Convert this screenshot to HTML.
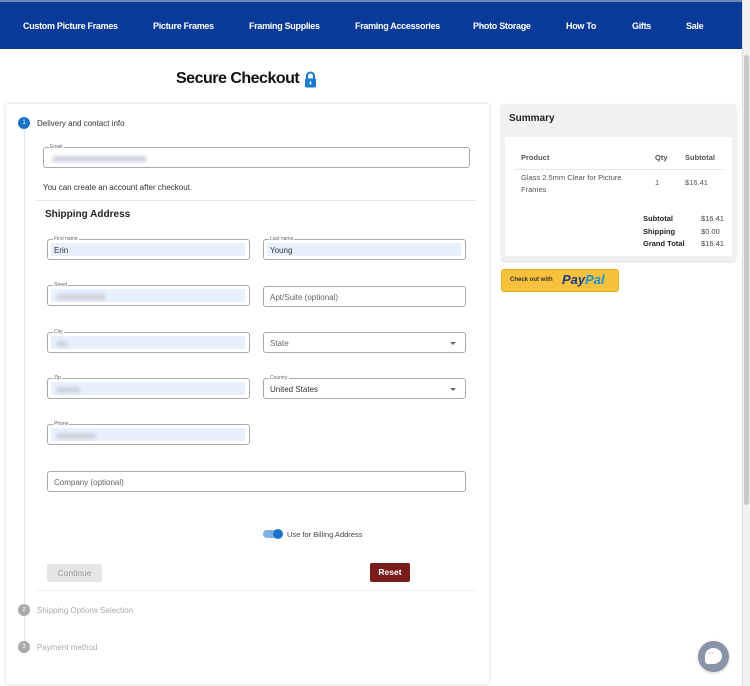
<!DOCTYPE html>
<html><head><style>
*{box-sizing:border-box;margin:0;padding:0}
body{width:750px;height:686px;overflow:hidden;background:#fff;font-family:"Liberation Sans",sans-serif;position:relative;color:#222}
.a{position:absolute}
.nav{left:0;top:0;width:742px;height:49px;background:#0a3a97;border-top:2px solid #6f86b8}
.nav span{position:absolute;top:19px;color:#fff;font-size:9px;font-weight:bold;white-space:nowrap;letter-spacing:-0.3px}
.f{position:absolute;border:1px solid #aaa;border-radius:3px;height:21px;background:#fff}
.f.fill::after{content:"";position:absolute;left:3px;right:4px;top:3px;bottom:3px;background:#e8f0fe}
.lbl{position:absolute;left:5px;top:-4px;font-size:5px;color:#666;background:#fff;padding:0 1px;line-height:6px;z-index:2}
.val{position:absolute;left:6px;top:6px;font-size:8px;color:#333;z-index:2}
.ph{position:absolute;left:6px;top:6px;font-size:8px;color:#666}
.blur{position:absolute;left:8px;top:8px;height:6px;background:#cfd4dc;border-radius:3px;filter:blur(1.5px);z-index:2}
.car{position:absolute;right:9px;top:9px;width:0;height:0;border-left:3px solid transparent;border-right:3px solid transparent;border-top:3px solid #666}
.step{position:absolute;width:12px;height:12px;border-radius:50%;font-size:6px;color:#fff;text-align:center;line-height:12px}
</style></head><body>
<div class="a nav">
<span style="left:23px">Custom Picture Frames</span>
<span style="left:153px">Picture Frames</span>
<span style="left:249px">Framing Supplies</span>
<span style="left:355px">Framing Accessories</span>
<span style="left:473px">Photo Storage</span>
<span style="left:566px">How To</span>
<span style="left:632px">Gifts</span>
<span style="left:686px">Sale</span>
</div>
<div class="a" style="left:742px;top:0;width:8px;height:686px;background:#f1f1f1;border-left:1px solid #ddd"></div>
<div class="a" style="left:744px;top:55px;width:5px;height:450px;background:#c8c8c8;border-radius:3px"></div>

<div class="a" style="left:176px;top:70px;font-size:16px;font-weight:bold;color:#111;letter-spacing:-0.5px">Secure Checkout</div>
<svg class="a" style="left:304px;top:71px" width="13" height="17" viewBox="0 0 13 17"><path d="M3 8V5a3.5 3.5 0 0 1 7 0v3" fill="none" stroke="#1a7bd0" stroke-width="2"/><rect x="1" y="7.5" width="11" height="9" rx="1.5" fill="#1a7bd0"/><rect x="5.7" y="10.5" width="1.6" height="3" fill="#fff"/></svg>

<div class="a" style="left:6px;top:104px;width:483px;height:580px;background:#fff;box-shadow:0 0 3px rgba(0,0,0,.18);border-radius:2px"></div>
<div class="a" style="left:24px;top:130px;width:1px;height:516px;background:#e4e4e4"></div>
<div class="step" style="left:18px;top:117px;background:#1a73c8">1</div>
<div class="a" style="left:37px;top:119px;font-size:8px;color:#333">Delivery and contact info</div>

<div class="f" style="left:43px;top:147px;width:427px;height:21px"><div class="lbl">Email</div><div class="blur" style="width:95px;left:8px"></div></div>
<div class="a" style="left:43px;top:183px;font-size:8px;color:#333">You can create an account after checkout.</div>
<div class="a" style="left:37px;top:200px;width:439px;height:1px;background:#e4e4e4"></div>
<div class="a" style="left:45px;top:209px;font-size:10px;font-weight:bold;color:#222">Shipping Address</div>

<div class="f fill" style="left:47px;top:239px;width:203px"><div class="lbl">First name</div><div class="val">Erin</div></div>
<div class="f fill" style="left:263px;top:239px;width:203px"><div class="lbl">Last name</div><div class="val">Young</div></div>
<div class="f fill" style="left:47px;top:285px;width:203px"><div class="lbl">Street</div><div class="blur" style="width:50px"></div></div>
<div class="f" style="left:263px;top:286px;width:203px"><div class="ph">Apt/Suite (optional)</div></div>
<div class="f fill" style="left:47px;top:332px;width:203px"><div class="lbl">City</div><div class="blur" style="width:12px"></div></div>
<div class="f" style="left:263px;top:332px;width:203px"><div class="ph">State</div><div class="car"></div></div>
<div class="f fill" style="left:47px;top:378px;width:203px"><div class="lbl">Zip</div><div class="blur" style="width:25px"></div></div>
<div class="f" style="left:263px;top:378px;width:203px"><div class="lbl">Country</div><div class="val" style="color:#333">United States</div><div class="car"></div></div>
<div class="f fill" style="left:47px;top:424px;width:203px"><div class="lbl">Phone</div><div class="blur" style="width:40px"></div></div>
<div class="f" style="left:47px;top:471px;width:419px"><div class="ph">Company (optional)</div></div>

<div class="a" style="left:263px;top:530px;width:19px;height:8px;border-radius:4px;background:#7fb0e3"></div>
<div class="a" style="left:273px;top:529px;width:10px;height:10px;border-radius:50%;background:#1a73c8"></div>
<div class="a" style="left:287px;top:530px;font-size:7.5px;color:#444">Use for Billing Address</div>

<div class="a" style="left:47px;top:564px;width:55px;height:18px;background:#e6e6e6;border-radius:2px;font-size:8.5px;color:#999;text-align:center;line-height:18px">Continue</div>
<div class="a" style="left:370px;top:563px;width:40px;height:19px;background:#7a1c1c;border-radius:2px;font-size:8.5px;color:#fff;text-align:center;line-height:19px;font-weight:bold">Reset</div>
<div class="a" style="left:37px;top:590px;width:439px;height:1px;background:#f0f0f0"></div>

<div class="step" style="left:18px;top:604px;background:#aaa">2</div>
<div class="a" style="left:37px;top:606px;font-size:8px;color:#aaa">Shipping Options Selection</div>
<div class="step" style="left:18px;top:641px;background:#aaa">3</div>
<div class="a" style="left:37px;top:643px;font-size:8px;color:#aaa">Payment method</div>

<div class="a" style="left:501px;top:104px;width:235px;height:157px;background:#f0f1f3;border-radius:3px;box-shadow:0 1px 2px rgba(0,0,0,.15)"></div>
<div class="a" style="left:509px;top:113px;font-size:10px;font-weight:bold;color:#222">Summary</div>
<div class="a" style="left:505px;top:137px;width:227px;height:119px;background:#fff"></div>
<div class="a" style="left:521px;top:153px;font-size:7.5px;font-weight:bold;color:#555">Product</div>
<div class="a" style="left:655px;top:153px;font-size:7.5px;font-weight:bold;color:#555">Qty</div>
<div class="a" style="left:685px;top:153px;font-size:7.5px;font-weight:bold;color:#555">Subtotal</div>
<div class="a" style="left:514px;top:169px;width:210px;height:1px;background:#e6e6e6"></div>
<div class="a" style="left:521px;top:172px;font-size:7.5px;color:#555;line-height:12px;width:110px">Glass 2.5mm Clear for Picture Frames</div>
<div class="a" style="left:655px;top:178px;font-size:7.5px;color:#555">1</div>
<div class="a" style="left:685px;top:178px;font-size:7.5px;color:#555">$16.41</div>
<div class="a" style="left:643px;top:213px;font-size:7.5px;font-weight:bold;color:#222;line-height:12.5px">Subtotal<br>Shipping<br>Grand Total</div>
<div class="a" style="left:701px;top:213px;font-size:7.5px;color:#444;line-height:12.5px">$16.41<br>$0.00<br>$16.41</div>

<div class="a" style="left:501px;top:269px;width:118px;height:23px;background:#f8c13b;border-radius:3px;border:1px solid #e5ad2a"></div>
<div class="a" style="left:510px;top:277px;font-size:6px;font-weight:bold;color:#333">Check out with</div>
<div class="a" style="left:562px;top:272px;font-size:13px;font-weight:bold;font-style:italic;color:#1a3d87">Pay<span style="color:#1e90d8">Pal</span></div>

<div class="a" style="left:698px;top:641px;width:31px;height:31px;border-radius:50%;background:#8a94a8;box-shadow:0 1px 3px rgba(0,0,0,.2)"></div>
<div class="a" style="left:705px;top:648px;width:17px;height:16px;border-radius:50% 50% 50% 20%;background:#fff"></div>
<div class="a" style="left:708px;top:651px;font-size:6px;color:#8a94a8;font-weight:bold">···</div>
</body></html>
